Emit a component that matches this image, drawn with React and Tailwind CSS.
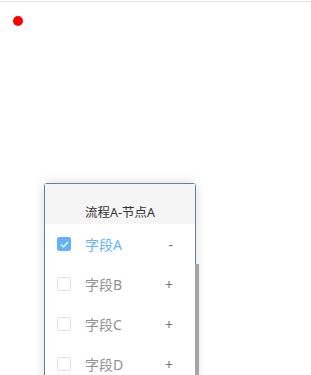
import React from 'react';

const fields = [
  { name: '字段A', checked: true },
  { name: '字段B', checked: false },
  { name: '字段C', checked: false },
  { name: '字段D', checked: false },
];

const App = () => {
  return (
    <div
      className="relative w-[311px] h-[375px] overflow-hidden bg-white"
      style={{ fontFamily: '"Noto Sans", "Noto Sans CJK SC", sans-serif' }}
    >
      <div className="h-[1px] mt-[1px] bg-[#e2e2e2]" />
      <div className="ml-[13px] mt-[14px] w-[10px] h-[10px] rounded-full bg-[#ff0000]" />

      {/* node card */}
      <div className="absolute left-[44px] top-[183px] w-[152px] border border-[#5b82a8] rounded-[3px] bg-white shadow-[0_0_12px_rgba(0,0,0,0.15)]">
        <div className="h-[40px] bg-[#f5f5f5] flex items-end justify-center pb-[1px]">
          <span className="text-[12.5px] leading-[20px] text-[#333]">流程A-节点A</span>
        </div>
        {fields.map((f) => (
          <div key={f.name} className="h-[40px] flex items-center pl-[12px] pr-[22px]">
            {f.checked ? (
              <div className="w-[14px] h-[14px] rounded-[2px] bg-[#66b1ff] flex items-center justify-center">
                <svg width="9" height="7" viewBox="0 0 9 7" fill="none">
                  <path d="M1 3.5 L3.5 6 L8 1" stroke="white" strokeWidth="1.2" />
                </svg>
              </div>
            ) : (
              <div className="w-[14px] h-[14px] rounded-[2px] border border-[#dcdfe6] bg-white" />
            )}
            <span
              className={`ml-[14px] text-[14px] ${f.checked ? 'text-[#66b1ff]' : 'text-[#909090]'}`}
            >
              {f.name}
            </span>
            <span className="ml-auto text-[14px] text-[#777]">{f.checked ? '-' : '+'}</span>
          </div>
        ))}
        <div className="absolute right-[-4px] top-[80px] w-[4px] h-[120px] bg-[#a6a6a6]" />
      </div>
    </div>
  );
};

export default App;
